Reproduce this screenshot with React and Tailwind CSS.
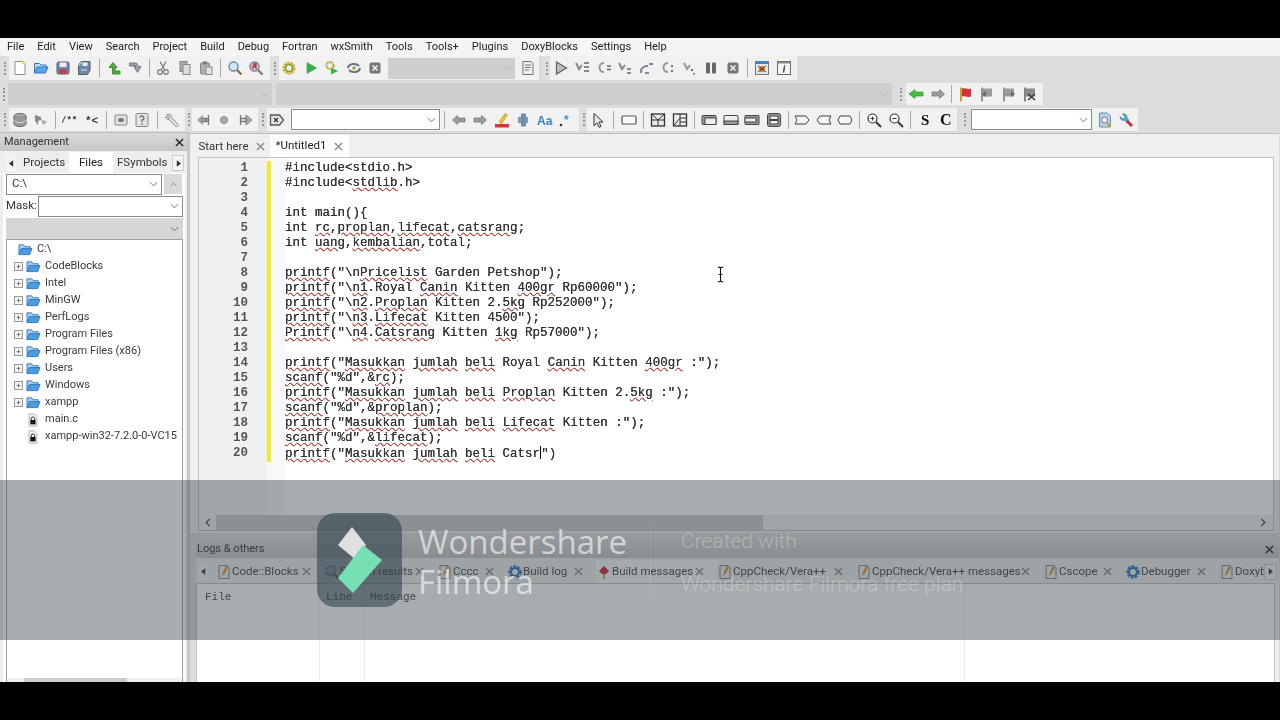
import React from 'react';

// small toolbar drawings, all on a 16x16 grid
const icons = {
  new: <><path d="M3 1.500h7l3 3v10H3z" fill="#fff" stroke="#8a8f94" /><path d="M11.500 0l1 2 2 .5-2 1-.5 2-1-2-2-.5 2-1z" fill="#f2d13c" /></>,
  open: <><path d="M1.500 13V3.500h5l1.500 1.500h5V7" fill="#bcd9f2" stroke="#2f78bf" /><path d="M1.500 13l2.500-6h11l-2.500 6z" fill="#5da4e2" stroke="#2f78bf" /></>,
  save: <><rect x="2" y="2" width="12" height="12" rx="1.500" fill="#6f86a6" stroke="#55647a" /><rect x="4.500" y="2.500" width="7" height="4.500" fill="#e9edf2" /><rect x="4.500" y="9" width="7" height="5" fill="#c43f4f" /></>,
  saveall: <><path d="M5 1.500h9v9l-2.500 4h-9v-9z" fill="#7186a3" stroke="#4f5f75" /><rect x="6.500" y="2.500" width="5" height="3.500" fill="#e9edf2" /><path d="M3 5.500l3-4M5 10h6" stroke="#dfe5ec" /></>,
  undo: <><path d="M3 7.500L7 2.500l4 5H9v3.500h5v3H6.500V7.500z" fill="#4fae3e" stroke="#2d7a24" strokeWidth=".8" /></>,
  redo: <><path d="M2.500 3h7l2 3.500h2.500l-3.500 6-3.500-6h2L8 6H2.500z" fill="#9aa0a6" stroke="#62676c" strokeWidth=".8" /></>,
  cut: <><path d="M5 1.500l4.500 8M11 1.500l-4.500 8" stroke="#777" strokeWidth="1.200" fill="none" /><circle cx="5" cy="12" r="2.300" fill="none" stroke="#777" strokeWidth="1.200" /><circle cx="11" cy="12" r="2.300" fill="none" stroke="#777" strokeWidth="1.200" /></>,
  copy: <><rect x="3" y="1.500" width="7" height="10" fill="#aaa" stroke="#888" /><rect x="6" y="4.500" width="7" height="10" fill="#ddd" stroke="#888" /></>,
  paste: <><rect x="2.500" y="3" width="9" height="11" rx="1" fill="#b0b0b0" stroke="#888" /><rect x="5" y="1.500" width="4" height="3" fill="#777" /><rect x="8" y="7" width="6" height="7.500" fill="#e4e4e4" stroke="#888" /></>,
  find: <><circle cx="6.500" cy="6.500" r="4.500" fill="#d3e6f5" stroke="#6d8ba3" strokeWidth="1.400" /><path d="M10 10l4.500 4.500" stroke="#8f6c30" strokeWidth="2.200" /></>,
  replace: <><circle cx="6.500" cy="6.500" r="4.500" fill="#e7c3c8" stroke="#6d8ba3" strokeWidth="1.400" /><path d="M5 4h3v2H5v3M7 6l1.500 3" stroke="#b32c3a" strokeWidth="1.300" fill="none" /><path d="M10 10l4.500 4.500" stroke="#777" strokeWidth="2.200" /></>,
  gear: <><circle cx="8" cy="8" r="5" fill="none" stroke="#c8b02a" strokeWidth="3" strokeDasharray="2.200 .8" /><circle cx="8" cy="8" r="3.400" fill="none" stroke="#7d9a2e" strokeWidth="1.400" /></>,
  play: <path d="M4 2.500l9.500 5.500L4 13.500z" fill="#35b548" stroke="#2a9a3a" strokeWidth=".6" />,
  buildrun: <><circle cx="6" cy="5.500" r="3.500" fill="none" stroke="#b6ad2c" strokeWidth="2.200" strokeDasharray="1.800 .7" /><path d="M7 7.500l7 3.500-7 3.500z" fill="#35b548" /></>,
  rebuild: <><path d="M2 8a6 4.500 0 0 1 11-2" fill="none" stroke="#6b7478" strokeWidth="2" /><path d="M14 8a6 4.500 0 0 1-11 2" fill="none" stroke="#6b7478" strokeWidth="2" /><circle cx="8" cy="8" r="1.800" fill="#9aa34a" /></>,
  abort: <><rect x="2.500" y="2.500" width="11" height="11" rx="2" fill="#777" /><path d="M5.500 5.500l5 5M10.500 5.500l-5 5" stroke="#eee" strokeWidth="1.700" /></>,
  doc: <><path d="M3 1.500h8l2 2v11H3z" fill="#eee" stroke="#777" /><path d="M5 5h6M5 7.500h6M5 10h4" stroke="#777" /></>,
  playgray: <path d="M3.500 2l10 6-10 6z" fill="#bdbdbd" stroke="#666" strokeWidth="1.300" />,
  stepa: <><path d="M2 3l3 6 3-4" fill="none" stroke="#7c8a94" strokeWidth="2" /><path d="M10 3h5M10 7h5M10 11h5" stroke="#666" strokeWidth="1.600" /></>,
  stepb: <><path d="M8 3a4.500 4.500 0 1 0 0 9" fill="none" stroke="#8b9aa4" strokeWidth="2" /><path d="M11 6h4M11 9.500h4" stroke="#666" strokeWidth="1.600" /></>,
  stepc: <><path d="M2 3l3 6 3-4" fill="none" stroke="#7c8a94" strokeWidth="2" /><path d="M10 9h4M10 13h4" stroke="#666" strokeWidth="1.600" /></>,
  stepd: <><path d="M2 13a6 6 0 0 1 7-7" fill="none" stroke="#7c8a94" strokeWidth="2" /><path d="M10 4h4M6 13h4" stroke="#666" strokeWidth="1.600" /></>,
  stepe: <><path d="M8 3a4.500 4.500 0 1 0 0 9" fill="none" stroke="#8b9aa4" strokeWidth="2" /><path d="M12 5v2M12 10v2" stroke="#666" strokeWidth="1.800" /></>,
  stepf: <><path d="M2 3l3 6 3-4" fill="none" stroke="#8b9aa4" strokeWidth="2" /><path d="M10 9v2M12 13v1.500" stroke="#666" strokeWidth="1.800" /></>,
  pause: <><rect x="3" y="2.500" width="4" height="11" rx="1" fill="#666" /><rect x="9" y="2.500" width="4" height="11" rx="1" fill="#666" /></>,
  debugwin: <><rect x="1.500" y="1.500" width="13" height="13" fill="#dfe8f2" stroke="#777" /><rect x="1.500" y="1.500" width="13" height="2.500" fill="#3f83c9" /><circle cx="8" cy="9" r="3" fill="#c8761f" /><path d="M4 6l8 6M12 6l-8 6" stroke="#7a3f10" /></>,
  infowin: <><rect x="1.500" y="1.500" width="13" height="13" fill="#f4f4f4" stroke="#666" /><rect x="1.500" y="1.500" width="13" height="2" fill="#888" /><path d="M8.500 6.500L7.500 12.500M8.700 5v.8" stroke="#333" strokeWidth="1.400" /></>,
  stack: <><ellipse cx="8" cy="4" rx="6" ry="2.500" fill="#aaa" stroke="#666" /><path d="M2 4v8c0 1.500 3 2.500 6 2.500s6-1 6-2.500V4" fill="#999" stroke="#666" /><path d="M2 8c0 1.500 3 2.500 6 2.500S14 9.500 14 8" fill="none" stroke="#ddd" /></>,
  arrowbox: <><path d="M2 3l6 2v3l-3 1v4L2 9z" fill="#888" /><path d="M8 7l6 3-4 3z" fill="#aaa" /></>,
  comment1: <text x="-1" y="11" fontSize="9" fontWeight="700" fontFamily="Liberation Mono, monospace" fill="#333">/**</text>,
  comment2: <text x="1" y="12" fontSize="11" fontWeight="700" fontFamily="Liberation Mono, monospace" fill="#333">*&lt;</text>,
  boxeye: <><rect x="2" y="3" width="12" height="10" rx="1" fill="#e2e2e2" stroke="#888" /><ellipse cx="8" cy="8" rx="3" ry="2" fill="#777" /></>,
  boxq: <><rect x="2" y="1.500" width="12" height="13" rx="1" fill="#e2e2e2" stroke="#888" /><path d="M6 5.500a2 2 0 1 1 2 2.500v2M8 11.500v1.500" stroke="#777" strokeWidth="1.400" fill="none" /></>,
  wrench: <path d="M3 2.500l3 3-1 1-3-2.500c-.5 2 1 4 3 3.500l7.500 7.500 2-2L7.500 5.500C8 3 5.500 1.500 3 2.500z" fill="#e6e6e6" stroke="#888" />,
  prev: <><path d="M8 3v10L2 8z" fill="#9b9b9b" /><path d="M7 6.500h5v3H7M13.500 3v10" stroke="#777" strokeWidth="1.300" fill="#aaa" /></>,
  dot: <circle cx="8" cy="8" r="3.500" fill="#a8a8a8" stroke="#8a8a8a" />,
  next: <><path d="M8 3v10l6-5z" fill="#aaa" stroke="#888" /><path d="M2.500 3v10M3 6.500h5v3H3" stroke="#777" strokeWidth="1.300" fill="none" /></>,
  tag: <><path d="M1.500 3h9l4 5-4 5h-9z" fill="#e6e6e6" stroke="#555" strokeWidth="1.300" /><path d="M5 6l4 4M9 6l-4 4" stroke="#333" strokeWidth="1.300" /></>,
  back: <path d="M1.500 8l5-4.500V6H14v4H6.500v2.500z" fill="#9c9c9c" stroke="#777" strokeWidth=".8" />,
  fwd: <path d="M14.500 8l-5-4.500V6H2v4h7.500v2.500z" fill="#9c9c9c" stroke="#777" strokeWidth=".8" />,
  highlight: <><path d="M5 10l6-8.500 2.500 1.500-6 9z" fill="#e6c32e" stroke="#b4931e" strokeWidth=".6" /><rect x="1" y="12" width="14" height="3.500" fill="#d9333b" /></>,
  bolt: <><rect x="3" y="5" width="10" height="6" fill="#7f9cb3" /><rect x="6" y="1.500" width="5" height="13" rx="1" fill="#6b90ad" /></>,
  aa: <text x="0" y="12.500" fontSize="12" fontWeight="700" fontFamily="Liberation Sans, sans-serif" fill="#3c7fc0">Aa</text>,
  regex: <><circle cx="3" cy="13" r="1.300" fill="#333" /><text x="6" y="12" fontSize="12" fontWeight="700" fontFamily="Liberation Sans, sans-serif" fill="#3c8fd0">*</text></>,
  pointer: <path d="M4 1.500l9 8.500H9l2 4.500-2 .8-2-4.500-3 3z" fill="#e8e8e8" stroke="#333" />,
  rect: <rect x="1" y="4" width="14" height="8" rx="1" fill="#fafafa" stroke="#555" strokeWidth="1.200" />,
  nsd1: <><rect x="1.500" y="2" width="13" height="12" fill="#e8e8e8" stroke="#333" strokeWidth="1.300" /><path d="M1.500 2L8 8l6.500-6M1.500 8h13M8 8v6" stroke="#333" fill="none" /></>,
  nsd2: <><rect x="1.500" y="2" width="13" height="12" fill="#eee" stroke="#333" strokeWidth="1.300" /><path d="M8 2v12M8 6h6.500M8 10h6.500M1.500 14L8 6" stroke="#333" fill="none" /></>,
  loop1: <><rect x="1" y="3.500" width="14" height="9" rx="1" fill="#999" stroke="#444" /><rect x="4" y="6" width="11" height="6.500" fill="#eee" stroke="#444" /></>,
  loop2: <><rect x="1" y="3.500" width="14" height="9" rx="1" fill="#eee" stroke="#444" /><rect x="1" y="9" width="14" height="3.500" fill="#999" stroke="#444" /></>,
  loop3: <><rect x="1" y="3.500" width="14" height="9" rx="1" fill="#999" stroke="#444" /><rect x="1" y="6" width="11" height="4" fill="#eee" stroke="#444" /></>,
  loop4: <><rect x="1.500" y="1.500" width="13" height="13" rx="2" fill="#999" stroke="#444" /><rect x="4" y="4" width="8" height="3.500" fill="#eee" stroke="#444" /><rect x="4" y="8.500" width="8" height="3.500" fill="#eee" stroke="#444" /></>,
  cut1: <path d="M1 4h11l3 4-3 4H1l2-4z" fill="#f4f4f4" stroke="#444" />,
  cut2: <path d="M4 4h11l-2 4 2 4H4L1 8z" fill="#f4f4f4" stroke="#444" />,
  cut3: <path d="M3 4h10l2 4-2 4H3L1 8z" fill="#f4f4f4" stroke="#444" />,
  zoomin: <><circle cx="6.500" cy="6.500" r="4.500" fill="#fafafa" stroke="#333" strokeWidth="1.200" /><path d="M4.500 6.500h4M6.500 4.500v4" stroke="#333" /><path d="M10 10l5 5" stroke="#333" strokeWidth="1.800" /></>,
  zoomout: <><circle cx="6.500" cy="6.500" r="4.500" fill="#fafafa" stroke="#333" strokeWidth="1.200" /><path d="M4.500 6.500h4" stroke="#333" /><path d="M10 10l5 5" stroke="#333" strokeWidth="1.800" /></>,
  bigS: <text x="4" y="13" fontSize="15" fontWeight="700" fontFamily="Liberation Serif, serif" fill="#111">S</text>,
  bigC: <text x="2" y="13" fontSize="16" fontWeight="700" fontFamily="Liberation Serif, serif" fill="#111">C</text>,
  backGreen: <path d="M1 8l6-4.500V6h8v4H7v2.500z" fill="#3fbf3a" stroke="#2e9a2a" strokeWidth=".7" />,
  flag: <><path d="M3 1.500v14" stroke="#c9971f" strokeWidth="1.800" /><path d="M4 2.500c3-1 5 1.500 9 0v8c-4 1.500-6-1-9 0z" fill="#dc2f3a" /></>,
  flagprev: <><path d="M3 1.500v14" stroke="#8a8a8a" strokeWidth="1.800" /><path d="M4 2.500h9v8H4z" fill="#9a9a9a" /><path d="M3 8l4-3v6z" fill="#666" /></>,
  flagnext: <><path d="M3 1.500v14" stroke="#8a8a8a" strokeWidth="1.800" /><path d="M4 2.500h9v8H4z" fill="#9a9a9a" /><path d="M14 8l-4-3v6z" fill="#666" /></>,
  flagx: <><path d="M3 1.500v14" stroke="#777" strokeWidth="1.800" /><path d="M4 2.500h9v8H4z" fill="#8c8c8c" /><path d="M6 8l7 6M13 8l-7 6" stroke="#333" strokeWidth="1.500" /></>,
  searchdoc: <><path d="M2.500 1h8l3 3v11h-11z" fill="#b7d4e6" stroke="#6a93ad" /><circle cx="7.500" cy="8" r="3" fill="#e7f0f5" stroke="#527" strokeWidth=".6" /><path d="M10 11l3.500 3.500" stroke="#c39a2d" strokeWidth="1.800" /></>,
  spanner: <><path d="M2 4.500L5 7l2-2-2.500-3C7 1 9.500 3 9 6l2 2-2.500 2.500L6.500 8.500C4 9 1.500 7 2 4.500z" fill="#55a6c9" stroke="#3a7f9e" strokeWidth=".5" /><path d="M9 9l5 5" stroke="#c82b3c" strokeWidth="3" /></>,
};

const Ico = ({ name, className = 'w-4 h-4' }) => (
  <svg viewBox="0 0 16 16" className={className}>{icons[name]}</svg>
);

const Tools = ({ names }) =>
  names.map((n, i) => (
    <div key={i} className="w-[21.5px] flex justify-center items-center shrink-0">
      <Ico name={n} />
    </div>
  ));

const Sep = ({ className }) => (
  <div className={`flex justify-center items-center shrink-0 ${className}`}>
    <div className="w-px h-[18px] bg-[#a8a8a8]" />
  </div>
);

const Grip = ({ className }) => (
  <div className={`flex justify-center items-center self-stretch shrink-0 bg-[#dedede] ${className}`}>
    <div className="h-[13px] border-l-2 border-dotted border-[#999]" />
  </div>
);

const Chevron = ({ className = 'text-[#777]' }) => (
  <svg viewBox="0 0 10 6" className={`w-[9px] h-[6px] ${className}`}>
    <path d="M1 1l4 4 4-4" fill="none" stroke="currentColor" strokeWidth="1" />
  </svg>
);

const Combo = ({ className, gray, text }) => (
  <div className={`flex items-center justify-between pr-[3px] shrink-0 ${gray ? 'bg-[#cfcfcf]' : 'bg-white border border-[#8a8a8a]'} ${className}`}>
    <span className="pl-[5px] text-[11.5px] text-[#333]">{text}</span>
    <Chevron className={gray ? 'text-[#b4b4b4]' : 'text-[#666]'} />
  </div>
);

const menus = ['File', 'Edit', 'View', 'Search', 'Project', 'Build', 'Debug', 'Fortran', 'wxSmith', 'Tools', 'Tools+', 'Plugins', 'DoxyBlocks', 'Settings', 'Help'];

const tree = ['CodeBlocks', 'Intel', 'MinGW', 'PerfLogs', 'Program Files', 'Program Files (x86)', 'Users', 'Windows', 'xampp'];

const code = [
  '#include<stdio.h>',
  '#include<~stdlib~.h>',
  '',
  'int main(){',
  'int ~rc~,~proplan~,~lifecat~,~catsrang~;',
  'int ~uang~,~kembalian~,total;',
  '',
  '~printf~("\\n~Pricelist~ Garden Petshop");',
  '~printf~("\\~n1~.Royal ~Canin~ Kitten ~400gr~ Rp60000");',
  '~printf~("\\~n2~.~Proplan~ Kitten 2.~5kg~ Rp252000");',
  '~printf~("\\~n3~.~Lifecat~ Kitten 4500");',
  '~Printf~("\\~n4~.~Catsrang~ Kitten ~1kg~ Rp57000");',
  '',
  '~printf~("~Masukkan~ ~jumlah~ ~beli~ Royal ~Canin~ Kitten ~400gr~ :");',
  '~scanf~("%d",&~rc~);',
  '~printf~("~Masukkan~ ~jumlah~ ~beli~ ~Proplan~ Kitten 2.~5kg~ :");',
  '~scanf~("%d",&~proplan~);',
  '~printf~("~Masukkan~ ~jumlah~ ~beli~ ~Lifecat~ Kitten :");',
  '~scanf~("%d",&~lifecat~);',
  '~printf~("~Masukkan~ ~jumlah~ ~beli~ Catsr|")',
];

// ~word~ gets the red spell check squiggle, | is the caret
const CodeLine = ({ text }) => (
  <div className="h-[15.05px] whitespace-pre">
    {text.split('~').map((part, i) =>
      i % 2 === 1 ? (
        <span key={i} className="underline decoration-wavy decoration-[#e2453f] decoration-1 underline-offset-1">{part}</span>
      ) : part.includes('|') ? (
        <span key={i}>
          {part.split('|')[0]}
          <span className="inline-block w-0 h-[13px] border-l border-black align-[-2px]" />
          {part.split('|')[1]}
        </span>
      ) : (
        <span key={i}>{part}</span>
      )
    )}
  </div>
);

const logTabs = [
  { label: 'Code::Blocks', icon: 'pen', w: 'w-[108px]' },
  { label: 'Search results', icon: 'find', w: 'w-[113px]' },
  { label: 'Cccc', icon: 'pen', w: 'w-[70px]' },
  { label: 'Build log', icon: 'cog', w: 'w-[89px]' },
  { label: 'Build messages', icon: 'ruby', w: 'w-[121px]', active: true },
  { label: 'CppCheck/Vera++', icon: 'pen', w: 'w-[139px]' },
  { label: 'CppCheck/Vera++ messages', icon: 'pen', w: 'w-[187px]' },
  { label: 'Cscope', icon: 'pen', w: 'w-[82px]' },
  { label: 'Debugger', icon: 'cog', w: 'w-[94px]' },
];

const TabIcon = ({ kind }) => {
  if (kind === 'pen')
    return (
      <svg viewBox="0 0 16 16" className="w-4 h-4 shrink-0">
        <path d="M3 1.500h8l2 2v11H3z" fill="#eee" stroke="#888" />
        <path d="M6 12l1-4 3-6 2 1-3 6z" fill="#e8882a" />
      </svg>
    );
  if (kind === 'cog')
    return (
      <svg viewBox="0 0 16 16" className="w-4 h-4 shrink-0">
        <circle cx="8" cy="8" r="5" fill="none" stroke="#2f74c4" strokeWidth="3.500" strokeDasharray="2.400 1.200" />
        <circle cx="8" cy="8" r="4" fill="none" stroke="#2f74c4" strokeWidth="2" />
      </svg>
    );
  if (kind === 'ruby')
    return (
      <svg viewBox="0 0 16 16" className="w-4 h-4 shrink-0">
        <path d="M3 7l5-5 5 5-3 3H6z" fill="#c9263a" />
        <path d="M8 10v5" stroke="#c9a032" strokeWidth="2" />
      </svg>
    );
  return <Ico name="find" className="w-4 h-4 shrink-0" />;
};

const Close = ({ className = 'text-[#8a8a8a]' }) => (
  <svg viewBox="0 0 10 10" className={`w-[9px] h-[9px] shrink-0 ${className}`}>
    <path d="M1 1l8 8M9 1l-8 8" stroke="currentColor" strokeWidth="1.500" />
  </svg>
);

const Folder = () => (
  <svg viewBox="0 0 16 14" className="w-[15px] h-[13px] shrink-0">
    <path d="M1 12.500V2h5l1.500 2H13v2" fill="#a9cdee" stroke="#2f78bf" />
    <path d="M1 12.500L3.500 6H15l-2.500 6.500z" fill="#4f9be0" stroke="#2f78bf" />
  </svg>
);

const Plus = () => (
  <div className="w-[9px] h-[9px] border border-[#999] bg-[#f4f4f4] flex items-center justify-center text-[8px] leading-none text-[#444] shrink-0">+</div>
);

const Lock = () => (
  <svg viewBox="0 0 12 16" className="w-[11px] h-[14px] shrink-0">
    <path d="M2 1h6l3 3v11H2z" fill="#f4f4f4" stroke="#aaa" />
    <rect x="3.500" y="8" width="6" height="5" fill="#111" />
    <path d="M4.500 8V6.500a2 2 0 0 1 4 0V8" fill="none" stroke="#111" />
  </svg>
);

const ArrowBtn = ({ dir, className }) => (
  <div className={`flex items-center justify-center shrink-0 ${className}`}>
    <svg viewBox="0 0 6 8" className="w-[5px] h-[7px]">
      <path d={dir === 'l' ? 'M5 0v8L0 4z' : 'M1 0v8l5-4z'} fill="#333" />
    </svg>
  </div>
);

export default function App() {
  return (
    <div className="relative w-[1280px] h-[720px] overflow-hidden bg-black font-['Roboto','Liberation_Sans',sans-serif] text-[11.5px] text-[#222]">
      <div className="h-[38px]" />
      <div className="h-[644px] bg-[#dcdcdc] flex flex-col blur-[0.4px]">
        {/* menu bar */}
        <div className="h-[18px] shrink-0 bg-[#f5f5f5] flex items-center gap-[13px] pl-[7px] pt-[1px] text-[11px] text-[#222]">
          {menus.map((m) => <span key={m}>{m}</span>)}
        </div>

        {/* toolbar row 1 */}
        <div className="h-[24px] shrink-0 flex">
          <div className="w-[270px] flex items-center bg-[#f1f1f1]">
            <Grip className="w-[9px]" />
            <Tools names={['new', 'open', 'save', 'saveall']} />
            <Sep className="w-[8px]" />
            <Tools names={['undo', 'redo']} />
            <Sep className="w-[6.5px]" />
            <Tools names={['cut', 'copy', 'paste']} />
            <Sep className="w-[7px]" />
            <Tools names={['find', 'replace']} />
          </div>
          <div className="ml-[2px] w-[267px] flex items-center bg-[#f1f1f1]">
            <Grip className="w-[6.5px]" />
            <Tools names={['gear', 'play', 'buildrun', 'rebuild', 'abort']} />
            <Combo gray className="ml-[2px] w-[127px] h-[21px]" />
            <div className="ml-[2px] flex"><Tools names={['doc']} /></div>
          </div>
          <div className="ml-[4px] w-[254px] flex items-center bg-[#f1f1f1]">
            <Grip className="w-[7px]" />
            <Tools names={['playgray', 'stepa', 'stepb', 'stepc', 'stepd', 'stepe', 'stepf', 'pause', 'abort']} />
            <Sep className="w-[8px]" />
            <Tools names={['debugwin', 'infowin']} />
          </div>
        </div>

        {/* toolbar row 2 */}
        <div className="mt-[3px] h-[22px] shrink-0 flex items-stretch">
          <Grip className="w-[8px]" />
          <Combo gray className="w-[264px]" />
          <Combo gray className="ml-[4px] w-[616px]" />
          <div className="ml-[5px] w-[146px] flex items-center bg-[#f1f1f1]">
            <Grip className="w-[8.5px]" />
            <Tools names={['backGreen', 'fwd']} />
            <Sep className="w-[6.5px]" />
            <Tools names={['flag', 'flagprev', 'flagnext', 'flagx']} />
          </div>
        </div>

        {/* toolbar row 3 */}
        <div className="mt-[3px] mb-px h-[23px] shrink-0 flex">
          <div className="w-[185px] flex items-center bg-[#f1f1f1]">
            <Grip className="w-[9px]" />
            <Tools names={['stack', 'arrowbox']} />
            <Sep className="w-[7.5px]" />
            <Tools names={['comment1', 'comment2']} />
            <Sep className="w-[7.5px]" />
            <Tools names={['boxeye', 'boxq']} />
            <Sep className="w-[8px]" />
            <Tools names={['wrench']} />
          </div>
          <div className="ml-[1px] w-[72px] flex items-center bg-[#f1f1f1]">
            <Grip className="w-[6px]" />
            <Tools names={['prev', 'dot', 'next']} />
          </div>
          <div className="ml-[1px] w-[320px] flex items-center bg-[#f1f1f1]">
            <Grip className="w-[7.5px]" />
            <Tools names={['tag']} />
            <Combo className="ml-[3px] w-[149px] h-[21px]" />
            <Sep className="w-[8px]" />
            <Tools names={['back', 'fwd', 'highlight', 'bolt', 'aa', 'regex']} />
          </div>
          <div className="ml-[1px] w-[377px] flex items-center bg-[#f1f1f1]">
            <Grip className="w-[7px]" />
            <Tools names={['pointer']} />
            <Sep className="w-[10px]" />
            <Tools names={['rect']} />
            <Sep className="w-[7.5px]" />
            <Tools names={['nsd1', 'nsd2']} />
            <Sep className="w-[8px]" />
            <Tools names={['loop1', 'loop2', 'loop3', 'loop4']} />
            <Sep className="w-[7px]" />
            <Tools names={['cut1', 'cut2', 'cut3']} />
            <Sep className="w-[7.5px]" />
            <Tools names={['zoomin', 'zoomout']} />
            <Sep className="w-[7.5px]" />
            <Tools names={['bigS', 'bigC']} />
          </div>
          <div className="ml-[1.5px] w-[179px] flex items-center bg-[#f1f1f1]">
            <Grip className="w-[12px]" />
            <Combo className="w-[121px] h-[21px]" />
            <div className="ml-[2.5px] flex"><Tools names={['searchdoc', 'spanner']} /></div>
          </div>
        </div>

        {/* main area */}
        <div className="flex-1 min-h-0 flex">
          {/* management panel */}
          <div className="w-[187px] shrink-0 flex flex-col pl-[3px] pr-[2px] bg-[#eeeeee] border-t border-[#bdbdbd]">
            <div className="h-[18px] -ml-[3px] -mr-[2px] pl-[4px] pr-[3px] shrink-0 flex items-center justify-between bg-linear-to-b from-[#d9d9d9] to-[#c6c6c6] text-[11px] text-[#333]">
              <span>Management</span>
              <Close className="text-[#222]" />
            </div>
            <div className="h-[22px] shrink-0 flex items-end">
              <ArrowBtn dir="l" className="ml-[3px] w-[10px] h-[16px] mb-[2px] bg-[#f4f4f4]" />
              <span className="ml-[7px] w-[43px] h-[20px] flex items-center text-[#333]">Projects</span>
              <span className="ml-[3px] w-[44px] h-[21px] flex items-center justify-center bg-white text-[#222]">Files</span>
              <span className="ml-[4px] w-[52px] h-[20px] flex items-center text-[#333]">FSymbols</span>
              <ArrowBtn dir="r" className="ml-[3px] w-[12px] h-[16px] mb-[2px] bg-[#f4f4f4] border border-[#ccc]" />
            </div>
            <div className="flex-1 min-h-0 flex flex-col bg-white pl-[3px] pr-[0px]">
              <div className="h-[22px] shrink-0 flex items-center">
                <Combo text="C:\" className="w-[156px] h-[21px]" />
                <div className="ml-[2px] w-[18px] h-[20px] bg-[#d9d9d9] flex items-center justify-center">
                  <svg viewBox="0 0 10 6" className="w-[7px] h-[5px]"><path d="M1 5l4-4 4 4" fill="none" stroke="#666" /></svg>
                </div>
              </div>
              <div className="h-[22px] shrink-0 flex items-center">
                <span className="w-[32px] text-[11.5px] text-[#333]">Mask:</span>
                <Combo className="w-[145px] h-[21px]" />
              </div>
              <div className="h-[21px] mt-[1px] shrink-0 w-[177px] bg-[#d6d6d6] flex items-center justify-end pr-[4px]">
                <Chevron className="text-[#666]" />
              </div>
              <div className="flex-1 w-[177px] border border-[#a0a0a0] border-b-0 bg-white flex flex-col min-h-0 text-[11px] text-[#3a3a3a]">
                <div className="h-[17px] mt-[1px] shrink-0 flex items-center pl-[11px] gap-[4px]"><Folder /><span>C:\</span></div>
                {tree.map((t) => (
                  <div key={t} className="h-[17px] shrink-0 flex items-center pl-[7px] whitespace-nowrap">
                    <Plus />
                    <span className="ml-[3px]"><Folder /></span>
                    <span className="ml-[4px]">{t}</span>
                  </div>
                ))}
                <div className="h-[17px] shrink-0 flex items-center pl-[20px] gap-[7px]"><Lock /><span>main.c</span></div>
                <div className="h-[17px] shrink-0 flex items-center pl-[20px] gap-[7px] whitespace-nowrap"><Lock /><span>xampp-win32-7.2.0-0-VC15</span></div>
                <div className="flex-1" />
                <div className="h-[4px] shrink-0 bg-[#f0f0f0] pl-[17px]"><div className="w-[103px] h-full bg-[#cdcdcd]" /></div>
              </div>
            </div>
          </div>

          {/* splitter */}
          <div className="w-[3px] shrink-0 bg-[#c8c8c8]" />

          {/* editor and logs */}
          <div className="flex-1 min-w-0 flex flex-col pr-[1px] bg-[#dcdcdc]">
            <div className="h-[400px] shrink-0 mt-px border-t border-[#bdbdbd] bg-[#efefef] flex flex-col pl-[8px] pr-[5px]">
              <div className="h-[23px] shrink-0 flex items-end text-[11.5px]">
                <div className="w-[72px] h-[21px] -ml-[2px] flex items-center justify-center gap-[8px] text-[#333]">
                  <span>Start here</span>
                  <Close />
                </div>
                <div className="w-[79px] h-[22px] ml-[2px] flex items-center justify-center gap-[8px] bg-white text-[#222]">
                  <span>*Untitled1</span>
                  <Close />
                </div>
              </div>
              <div className="h-[374px] shrink-0 border border-[#c4c4c4] bg-white flex flex-col min-h-0">
                <div className="flex-1 min-h-0 flex">
                  <div className="w-[68px] shrink-0 bg-[#f0f0f0] pt-[2.5px] pr-[19px] font-['Liberation_Mono',monospace] font-bold text-[12.5px] leading-[15.05px] text-[#555] text-right">
                    {code.map((_, i) => <div key={i} className="h-[15.05px]">{i + 1}</div>)}
                  </div>
                  <div className="w-[18px] shrink-0 bg-[#f8f8f8] pt-[2.5px]">
                    <div className="w-[4px] h-[301px] bg-[#f2ec2e]" />
                  </div>
                  <div className="flex-1 min-w-0 pt-[2.5px] font-['Liberation_Mono',monospace] text-[12.5px] leading-[15.05px] text-[#333] [text-shadow:0_0_0.4px_#333]">
                    {code.map((l, i) => <CodeLine key={i} text={l} />)}
                  </div>
                </div>
                <div className="h-[15px] shrink-0 flex items-center bg-[#f0f0f0]">
                  <div className="w-[17px] flex justify-center">
                    <svg viewBox="0 0 6 10" className="w-[6px] h-[9px]"><path d="M5 1L1 5l4 4" fill="none" stroke="#444" strokeWidth="1.400" /></svg>
                  </div>
                  <div className="w-[547px] h-full bg-[#cdcdcd]" />
                  <div className="flex-1" />
                  <div className="w-[20px] flex justify-center">
                    <svg viewBox="0 0 6 10" className="w-[6px] h-[9px]"><path d="M1 1l4 4-4 4" fill="none" stroke="#444" strokeWidth="1.400" /></svg>
                  </div>
                </div>
              </div>
            </div>

            {/* logs panel */}
            <div className="mt-[8px] ml-[6px] flex-1 min-h-0 flex flex-col bg-[#eeeeee]">
              <div className="h-[17px] shrink-0 flex items-center justify-between pl-[1px] pr-[5px] bg-linear-to-b from-[#d9d9d9] to-[#c6c6c6] text-[11px] text-[#333]">
                <span>Logs &amp; others</span>
                <Close className="text-[#222]" />
              </div>
              <div className="h-[23px] mt-[2px] shrink-0 flex items-center overflow-hidden pl-[2px] text-[11.5px] text-[#444]">
                <ArrowBtn dir="l" className="w-[10px] h-[16px] bg-[#f4f4f4]" />
                <div className="w-[8px] shrink-0" />
                {logTabs.map((t) => (
                  <div key={t.label} className={`${t.w} shrink-0 h-full flex items-center justify-between pr-[13px] whitespace-nowrap ${t.active ? 'bg-[#fafafa]' : ''}`}>
                    <span className="flex items-center"><TabIcon kind={t.icon} />{t.label}</span>
                    <Close />
                  </div>
                ))}
                <div className="w-[45px] shrink-0 h-full flex items-center overflow-hidden whitespace-nowrap"><TabIcon kind="pen" />Doxyblocks</div>
                <ArrowBtn dir="r" className="w-[13px] h-[16px] bg-[#f4f4f4] border border-[#ccc]" />
              </div>
              <div className="flex-1 min-h-0 mr-[4px] border border-[#c4c4c4] border-b-0 bg-white flex font-['Liberation_Mono',monospace] text-[11px] text-[#444]">
                <div className="w-[123px] shrink-0 pl-[8px] pt-[5px] border-r border-[#eeeeee]">File</div>
                <div className="w-[45px] shrink-0 pl-[6px] pt-[5px] border-r border-[#eeeeee]">Line</div>
                <div className="w-[600px] shrink-0 pl-[5px] pt-[5px] border-r border-[#eeeeee]">Message</div>
              </div>
            </div>
          </div>
        </div>
      </div>
      <div className="h-[38px]" />

      {/* mouse cursor over the editor */}
      <svg viewBox="0 0 10 18" className="absolute left-[716px] top-[266px] w-[9px] h-[17px]">
        <path d="M2 1h2l1 1 1-1h2M5 2v14M2 17h2l1-1 1 1h2M3 9h4" fill="none" stroke="#111" strokeWidth="1.200" />
      </svg>

      {/* video editor watermark band */}
      <div className="absolute left-0 top-[480px] w-full h-[160px] bg-[#3c464c]/45">
        <div className="absolute left-[317px] top-[33px] w-[85px] h-[94px] rounded-[18px] bg-[#34454f]/60 flex items-center justify-center">
          <svg viewBox="0 0 85 94" className="w-[85px] h-[94px]">
            <path d="M35 14l14 18-10 15-18-15z" fill="#dfe0e1" />
            <path d="M46 32l19 15-29 33-15-15z" fill="#76e0b4" />
          </svg>
        </div>
        <div className="absolute left-[418px] top-[42px] font-['Open_Sans','Roboto',sans-serif] text-[33px] leading-[40px] text-white/60">Wondershare</div>
        <div className="absolute left-[418px] top-[82px] font-['Open_Sans','Roboto',sans-serif] text-[33px] leading-[40px] text-white/60">Filmora</div>
        <div className="absolute left-[650px] top-[45px] w-px h-[75px] bg-white/10" />
        <div className="absolute left-[681px] top-[48px] font-['Roboto',sans-serif] font-light text-[21px] leading-[26px] text-white/30">Created with</div>
        <div className="absolute left-[681px] top-[91px] font-['Roboto',sans-serif] font-light text-[21px] leading-[26px] text-white/30 whitespace-nowrap">Wondershare Filmora free plan</div>
      </div>
    </div>
  );
}
